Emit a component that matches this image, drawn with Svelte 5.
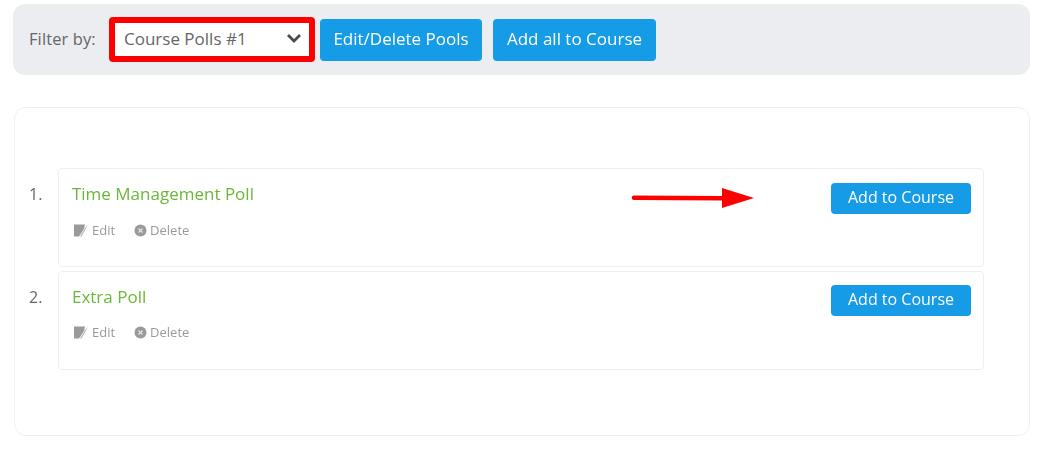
<script lang="ts">
	const polls = [
		{ id: 1, title: 'Time Management Poll', marked: true },
		{ id: 2, title: 'Extra Poll', marked: false }
	];
</script>

<div class="page">
	<div class="toolbar">
		<span class="filter-label">Filter by:</span>
		<div class="select">
			<span>Course Polls #1</span>
			<svg width="16" height="10" viewBox="0 0 16 10">
				<path d="M2 2l6 6 6-6" fill="none" stroke="#4a4a4a" stroke-width="2.8" />
			</svg>
		</div>
		<button class="btn big first">Edit/Delete Pools</button>
		<button class="btn big">Add all to Course</button>
	</div>

	<div class="panel">
		{#each polls as poll, i}
			<div class="line">
				<span class="num">{i + 1}.</span>
				<div class="row">
					<div class="info">
						<div class="title">{poll.title}</div>
						<div class="actions">
							<span class="action">
								<svg class="edit-icon" width="16" height="13" viewBox="0 0 16 13">
									<path d="M1 0.500h11l-1 4.500-5 7.500H1z" fill="#9a9a9a" />
									<path d="M12.500 3.500L15 1 8.500 12.500H7z" fill="#b5b5b5" />
								</svg>
								Edit
							</span>
							<span class="action">
								<svg width="13" height="13" viewBox="0 0 13 13">
									<circle cx="6.500" cy="6.500" r="6" fill="#9a9a9a" />
									<path d="M4.500 4.500l4 4M8.500 4.500l-4 4" stroke="#e4e4e4" stroke-width="1.200" />
								</svg>
								Delete
							</span>
						</div>
					</div>
					<button class="btn small">Add to Course</button>
					{#if poll.marked}
						<svg class="arrow" width="124" height="24" viewBox="0 0 124 24">
							<path d="M3 9.500L91 10V2L123 12 91 22V14.500L3 14a2.250 2.250 0 0 1 0-4.500z" fill="#fe0000" />
						</svg>
					{/if}
				</div>
			</div>
		{/each}
	</div>
</div>

<style>
	:global(body) {
		background: #fff;
		font-family: 'Open Sans', sans-serif;
	}

	.page {
		padding: 4px 8px 0 13px;
		filter: blur(0.35px);
	}

	.toolbar {
		display: flex;
		align-items: center;
		height: 71px;
		box-sizing: border-box;
		padding: 0 0 0 16px;
		background: #ecedf1;
		border-radius: 12px;
	}

	.filter-label {
		font-size: 16.500px;
		letter-spacing: 0.1px;
		color: #666;
		width: 80px;
		padding-bottom: 2px;
	}

	.select {
		display: flex;
		align-items: center;
		justify-content: space-between;
		box-sizing: border-box;
		width: 206px;
		height: 45px;
		padding: 0 7px 3px 9px;
		background: #fff;
		border: 6px solid #fe0000;
		border-radius: 4px;
		font-size: 17px;
		color: #666;
	}

	.btn {
		border: none;
		background: #169be6;
		color: #fff;
		font-family: inherit;
		font-weight: 500;
		cursor: pointer;
		white-space: nowrap;
		padding: 0 0 3px;
	}

	.big {
		width: 163px;
		height: 42px;
		margin-left: 11px;
		border-radius: 4px;
		font-size: 17px;
	}

	.big.first {
		width: 162px;
		margin-left: 5px;
	}

	.small {
		width: 140px;
		height: 31px;
		margin-top: 14px;
		border-radius: 4px;
		font-size: 16px;
	}

	.line + .line .small {
		margin-top: 13px;
	}

	.panel {
		display: flex;
		flex-direction: column;
		gap: 4px;
		box-sizing: border-box;
		width: 1016px;
		height: 329px;
		margin: 32px 0 0 1px;
		padding: 60px 45px 0 14px;
		border: 1px solid #eef0f0;
		border-radius: 12px;
	}

	.line {
		display: flex;
		align-items: flex-start;
	}

	.num {
		width: 29px;
		padding-top: 16px;
		font-size: 16px;
		color: #666;
		line-height: 20px;
	}

	.row {
		position: relative;
		display: flex;
		justify-content: space-between;
		align-items: flex-start;
		box-sizing: border-box;
		width: 927px;
		height: 99px;
		padding: 0 12px 0 13px;
		border: 1px solid #eef0f0;
		border-radius: 4px;
	}

	.title {
		margin-top: 15px;
		font-size: 17px;
		line-height: 20px;
		color: #6ab838;
	}

	.actions {
		display: flex;
		gap: 19px;
		margin-top: 18px;
		font-size: 13px;
		line-height: 16px;
		color: #999;
	}

	.line + .line .actions {
		margin-top: 17px;
	}

	.action {
		display: flex;
		align-items: center;
		gap: 3px;
	}

	.edit-icon {
		margin-left: 1px;
	}

	.arrow {
		position: absolute;
		left: 572px;
		top: 17px;
	}
</style>
